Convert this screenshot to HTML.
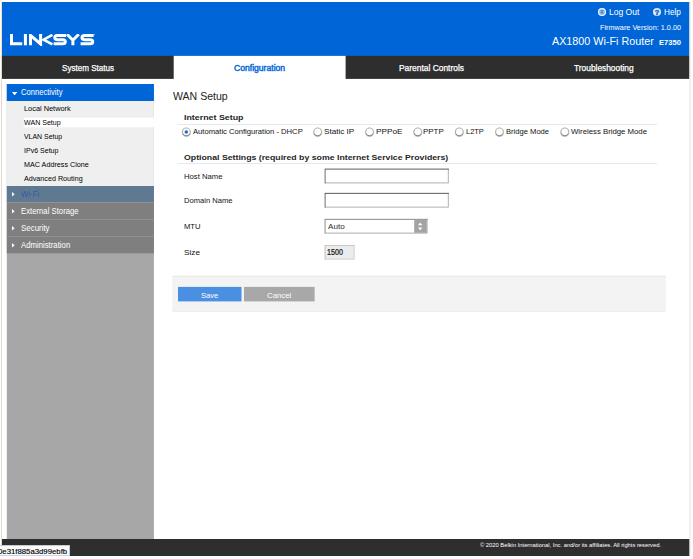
<!DOCTYPE html>
<html><head><meta charset="utf-8">
<style>
html,body{margin:0;padding:0;background:#fff;}
body{width:693px;height:559px;position:relative;overflow:hidden;font-family:"Liberation Sans",sans-serif;}
.a{position:absolute;}
.t{position:absolute;white-space:nowrap;line-height:1;transform-origin:0 0;}
</style></head><body>
<svg class="a" style="left:0;top:0" width="693" height="559" viewBox="0 0 693 559"><rect x="0" y="0" width="1.00" height="559.00" fill="#fffdfb"/>
<rect x="1" y="2" width="1.00" height="54.00" fill="#f3dcc8"/>
<rect x="1" y="56" width="1.00" height="500.00" fill="#e3d9cf"/>
<rect x="689.3" y="2" width="1.30" height="554.00" fill="#ebe8e4"/>
<rect x="2" y="2" width="687.20" height="54.00" fill="#0066d7"/>
<rect x="2" y="55.85" width="687.20" height="23.05" fill="#2e2e2e"/>
<rect x="173.7" y="55.85" width="171.90" height="23.15" fill="#fff"/>
<rect x="6.8" y="84" width="147.10" height="455.00" fill="#a7a7a7"/>
<rect x="6.8" y="84" width="147.10" height="17.00" fill="#0066d7"/>
<rect x="6.8" y="101" width="147.10" height="85.00" fill="#efefef"/>
<rect x="23.8" y="117.7" width="130.10" height="9.60" fill="#fff"/>
<rect x="6.8" y="186" width="147.10" height="16.20" fill="#607993"/>
<rect x="6.8" y="202.2" width="147.10" height="51.10" fill="#7f7f7f"/>
<rect x="6.8" y="202.0" width="147.10" height="0.80" fill="#969696"/>
<rect x="6.8" y="219.2" width="147.10" height="0.80" fill="#969696"/>
<rect x="6.8" y="236.2" width="147.10" height="0.80" fill="#969696"/>
<rect x="178" y="124" width="479.20" height="0.80" fill="#dfe3e8"/>
<rect x="178" y="163" width="479.20" height="0.80" fill="#dfe3e8"/>
<rect x="324.7" y="168.7" width="124.10" height="14.70" fill="#b0b0b0"/>
<rect x="324.7" y="168.7" width="124.10" height="1.00" fill="#5c5c5c"/>
<rect x="324.7" y="169.7" width="1.00" height="13.70" fill="#747474"/>
<rect x="325.7" y="169.7" width="122.10" height="12.70" fill="#fff"/>
<rect x="324.7" y="192.9" width="124.10" height="14.70" fill="#b0b0b0"/>
<rect x="324.7" y="192.9" width="124.10" height="1.00" fill="#5c5c5c"/>
<rect x="324.7" y="193.9" width="1.00" height="13.70" fill="#747474"/>
<rect x="325.7" y="193.9" width="122.10" height="12.70" fill="#fff"/>
<rect x="324.7" y="218.9" width="102.90" height="14.70" fill="#adadad"/>
<rect x="324.7" y="218.9" width="102.90" height="1.00" fill="#8e8e8e"/>
<rect x="324.7" y="219.9" width="1.00" height="13.70" fill="#9c9c9c"/>
<rect x="325.7" y="219.9" width="100.90" height="12.70" fill="#fff"/>
<rect x="414.2" y="219.8" width="12.60" height="13.00" fill="#a3a3a3"/>
<rect x="324.7" y="245.0" width="29.90" height="14.60" fill="#cecece"/>
<rect x="324.7" y="245.0" width="29.90" height="1.00" fill="#c8c8c8"/>
<rect x="324.7" y="246.0" width="1.00" height="13.60" fill="#cacaca"/>
<rect x="325.7" y="246.0" width="27.90" height="12.60" fill="#ececec"/>
<rect x="172.3" y="275.8" width="493.40" height="36.00" fill="#f3f3f3"/>
<rect x="172.3" y="275.8" width="493.40" height="0.80" fill="#e4e4e4"/>
<rect x="172.3" y="311.1" width="493.40" height="0.70" fill="#ebebeb"/>
<rect x="178" y="286.9" width="63.50" height="14.50" fill="#4a8fe2"/>
<rect x="244" y="286.9" width="70.60" height="14.50" fill="#a8a8a8"/>
<rect x="2" y="539" width="687.30" height="17.00" fill="#2e2e2e"/></svg>
<svg class="a" style="left:10.4px;top:34.3px;" width="85" height="12" viewBox="0 0 85 12">
<g fill="none" stroke="#fff" stroke-width="3" stroke-linejoin="miter">
<path d="M1.5 0 V9.8 H12.2"/>
<path d="M15.4 0 V11.3"/>
<path d="M20.5 11.3 V1.4 L30.6 10 V0"/>
<path d="M42.4 0.9 L33.6 5.65 L42.4 10.4" stroke-width="2.6"/>
<path d="M56 1.5 H47.2 Q44.8 1.5 44.8 3.6 Q44.8 5.65 47.2 5.65 H52.9 Q55.3 5.65 55.3 7.7 Q55.3 9.8 52.9 9.8 H43.6"/>
<path d="M57 0.2 L62.9 6.2 L68.8 0.2 M62.9 5.6 V11.3"/>
<path d="M83.6 1.5 H74.4 Q72 1.5 72 3.6 Q72 5.65 74.4 5.65 H80.3 Q82.7 5.65 82.7 7.7 Q82.7 9.8 80.3 9.8 H70.6"/>
</g><circle cx="84.6" cy="0.8" r="0.5" fill="#cfe0f7"/></svg>
<svg class="a" style="left:596.9px;top:7.2px;" width="10" height="10" viewBox="0 0 10 10">
<circle cx="5" cy="5" r="3.45" fill="#7db0eb" stroke="#edf3fc" stroke-width="1.25"/>
<rect x="4.3" y="3.0" width="1.5" height="3.2" fill="#2f74cf"/><rect x="4.3" y="4.3" width="1.5" height="0.7" fill="#a9c9f0"/>
</svg>
<svg class="a" style="left:652px;top:7.2px;" width="10" height="10" viewBox="0 0 10 10">
<circle cx="5" cy="5" r="4.05" fill="#d9e6f7"/>
<text x="5" y="7.6" font-family="Liberation Sans" font-weight="bold" font-size="7.4" fill="#0f5fc6" stroke="#0f5fc6" stroke-width="0.35" text-anchor="middle">?</text>
</svg>
<svg class="a" style="left:11.8px;top:91.9px" width="5.2" height="3.4" viewBox="0 0 5.2 3.4"><path d="M0 0 H5.2 L2.6 3.4 Z" fill="#fff"/></svg>
<svg class="a" style="left:12.3px;top:192.3px" width="2.6" height="4.4" viewBox="0 0 2.6 4.4"><path d="M0 0 V4.4 L2.6 2.2 Z" fill="#fff"/></svg>
<svg class="a" style="left:12.3px;top:209.4px" width="2.6" height="4.4" viewBox="0 0 2.6 4.4"><path d="M0 0 V4.4 L2.6 2.2 Z" fill="#fff"/></svg>
<svg class="a" style="left:12.3px;top:226.4px" width="2.6" height="4.4" viewBox="0 0 2.6 4.4"><path d="M0 0 V4.4 L2.6 2.2 Z" fill="#fff"/></svg>
<svg class="a" style="left:12.3px;top:243.4px" width="2.6" height="4.4" viewBox="0 0 2.6 4.4"><path d="M0 0 V4.4 L2.6 2.2 Z" fill="#fff"/></svg>
<svg class="a" style="left:0;top:120px" width="693" height="24" viewBox="0 120 693 24"><circle cx="186.3" cy="132.5" r="4.1" fill="none" stroke="#cfcfcf" stroke-width="0.9"/><circle cx="186.3" cy="131.9" r="4.0" fill="#fcfcfc" stroke="#a8a8a8" stroke-width="0.95"/><path d="M182.84 129.90 A4.0 4.0 0 0 1 189.76 129.90" fill="none" stroke="#d2d2d2" stroke-width="0.95"/><path d="M182.84 133.90 A4.0 4.0 0 0 0 189.76 133.90" fill="none" stroke="#808080" stroke-width="0.95"/><circle cx="317.7" cy="132.5" r="4.1" fill="none" stroke="#cfcfcf" stroke-width="0.9"/><circle cx="317.7" cy="131.9" r="4.0" fill="#fcfcfc" stroke="#a8a8a8" stroke-width="0.95"/><path d="M314.24 129.90 A4.0 4.0 0 0 1 321.16 129.90" fill="none" stroke="#d2d2d2" stroke-width="0.95"/><path d="M314.24 133.90 A4.0 4.0 0 0 0 321.16 133.90" fill="none" stroke="#808080" stroke-width="0.95"/><circle cx="369.6" cy="132.5" r="4.1" fill="none" stroke="#cfcfcf" stroke-width="0.9"/><circle cx="369.6" cy="131.9" r="4.0" fill="#fcfcfc" stroke="#a8a8a8" stroke-width="0.95"/><path d="M366.14 129.90 A4.0 4.0 0 0 1 373.06 129.90" fill="none" stroke="#d2d2d2" stroke-width="0.95"/><path d="M366.14 133.90 A4.0 4.0 0 0 0 373.06 133.90" fill="none" stroke="#808080" stroke-width="0.95"/><circle cx="417.8" cy="132.5" r="4.1" fill="none" stroke="#cfcfcf" stroke-width="0.9"/><circle cx="417.8" cy="131.9" r="4.0" fill="#fcfcfc" stroke="#a8a8a8" stroke-width="0.95"/><path d="M414.34 129.90 A4.0 4.0 0 0 1 421.26 129.90" fill="none" stroke="#d2d2d2" stroke-width="0.95"/><path d="M414.34 133.90 A4.0 4.0 0 0 0 421.26 133.90" fill="none" stroke="#808080" stroke-width="0.95"/><circle cx="459.3" cy="132.5" r="4.1" fill="none" stroke="#cfcfcf" stroke-width="0.9"/><circle cx="459.3" cy="131.9" r="4.0" fill="#fcfcfc" stroke="#a8a8a8" stroke-width="0.95"/><path d="M455.84 129.90 A4.0 4.0 0 0 1 462.76 129.90" fill="none" stroke="#d2d2d2" stroke-width="0.95"/><path d="M455.84 133.90 A4.0 4.0 0 0 0 462.76 133.90" fill="none" stroke="#808080" stroke-width="0.95"/><circle cx="499.5" cy="132.5" r="4.1" fill="none" stroke="#cfcfcf" stroke-width="0.9"/><circle cx="499.5" cy="131.9" r="4.0" fill="#fcfcfc" stroke="#a8a8a8" stroke-width="0.95"/><path d="M496.04 129.90 A4.0 4.0 0 0 1 502.96 129.90" fill="none" stroke="#d2d2d2" stroke-width="0.95"/><path d="M496.04 133.90 A4.0 4.0 0 0 0 502.96 133.90" fill="none" stroke="#808080" stroke-width="0.95"/><circle cx="564.8" cy="132.5" r="4.1" fill="none" stroke="#cfcfcf" stroke-width="0.9"/><circle cx="564.8" cy="131.9" r="4.0" fill="#fcfcfc" stroke="#a8a8a8" stroke-width="0.95"/><path d="M561.34 129.90 A4.0 4.0 0 0 1 568.26 129.90" fill="none" stroke="#d2d2d2" stroke-width="0.95"/><path d="M561.34 133.90 A4.0 4.0 0 0 0 568.26 133.90" fill="none" stroke="#808080" stroke-width="0.95"/><circle cx="186.3" cy="131.9" r="1.75" fill="#1b6ad0"/></svg>
<svg class="a" style="left:418.4px;top:222px" width="4.4" height="8.6" viewBox="0 0 4.4 8.6"><path d="M0 3.2 L2.2 0.4 L4.4 3.2 Z M0 5.4 L2.2 8.2 L4.4 5.4 Z" fill="#fff"/></svg>
<div class="a" style="left:0px;top:545px;width:69.70px;height:11.40px;background:#fbfbfb;box-sizing:border-box;border-top:0.8px solid #c9c9c9;border-right:0.8px solid #c9c9c9;border-bottom:0.8px solid #c5d3e6;overflow:hidden;"></div>
<div class="t" style="left:608.61px;top:8.70px;font-size:8.2px;color:#fff;transform:scaleX(1.0411);">Log Out</div>
<div class="t" style="left:664.15px;top:8.70px;font-size:8.2px;color:#fff;transform:scaleX(1.0028);">Help</div>
<div class="t" style="left:600.10px;top:25.45px;font-size:6.7px;color:#fff;transform:scaleX(1.0902);">Firmware Version: 1.0.00</div>
<div class="t" style="left:552.35px;top:36.65px;font-size:10.3px;color:#fff;transform:scaleX(1.0459);">AX1800 Wi-Fi Router</div>
<div class="t" style="left:659.02px;top:39.50px;font-size:6.6px;font-weight:bold;color:#fff;transform:scaleX(1.1547);">E7350</div>
<div class="t" style="left:62.01px;top:64.10px;font-size:8.4px;color:#fff;transform:scaleX(0.9650);-webkit-text-stroke:0.25px currentColor;">System Status</div>
<div class="t" style="left:234.16px;top:64.10px;font-size:8.4px;color:#0066d7;transform:scaleX(1.0260);-webkit-text-stroke:0.4px currentColor;">Configuration</div>
<div class="t" style="left:399.00px;top:64.10px;font-size:8.4px;color:#fff;transform:scaleX(1.0039);-webkit-text-stroke:0.25px currentColor;">Parental Controls</div>
<div class="t" style="left:573.82px;top:64.10px;font-size:8.4px;color:#fff;transform:scaleX(0.9982);-webkit-text-stroke:0.25px currentColor;">Troubleshooting</div>
<div class="t" style="left:21.20px;top:88.70px;font-size:8.2px;color:#fff;transform:scaleX(0.9304);">Connectivity</div>
<div class="t" style="left:23.69px;top:105.10px;font-size:7.4px;color:#000;transform:scaleX(0.9983);">Local Network</div>
<div class="t" style="left:23.89px;top:119.10px;font-size:7.4px;color:#000;transform:scaleX(0.9571);">WAN Setup</div>
<div class="t" style="left:23.89px;top:133.10px;font-size:7.4px;color:#000;transform:scaleX(0.9372);">VLAN Setup</div>
<div class="t" style="left:23.64px;top:147.10px;font-size:7.4px;color:#000;transform:scaleX(0.9517);">IPv6 Setup</div>
<div class="t" style="left:23.71px;top:161.10px;font-size:7.4px;color:#000;transform:scaleX(0.9733);">MAC Address Clone</div>
<div class="t" style="left:23.89px;top:175.10px;font-size:7.4px;color:#000;transform:scaleX(0.9705);">Advanced Routing</div>
<div class="t" style="left:21.36px;top:190.70px;font-size:8.2px;color:#315e96;transform:scaleX(0.9523);">Wi-Fi</div>
<div class="t" style="left:20.77px;top:207.70px;font-size:8.2px;color:#fff;transform:scaleX(0.9447);">External Storage</div>
<div class="t" style="left:20.75px;top:224.70px;font-size:8.2px;color:#fff;transform:scaleX(0.9663);">Security</div>
<div class="t" style="left:21.03px;top:241.70px;font-size:8.2px;color:#fff;transform:scaleX(0.9486);">Administration</div>
<div class="t" style="left:172.74px;top:90.75px;font-size:11.1px;color:#222;transform:scaleX(0.9501);">WAN Setup</div>
<div class="t" style="left:184.13px;top:113.80px;font-size:8.0px;font-weight:bold;color:#262626;transform:scaleX(1.1066);">Internet Setup</div>
<div class="t" style="left:192.82px;top:128.00px;font-size:7.6px;color:#111;transform:scaleX(1.0037);">Automatic Configuration - DHCP</div>
<div class="t" style="left:324.02px;top:128.00px;font-size:7.6px;color:#111;transform:scaleX(1.0712);">Static IP</div>
<div class="t" style="left:375.52px;top:128.00px;font-size:7.6px;color:#111;transform:scaleX(1.0857);">PPPoE</div>
<div class="t" style="left:423.36px;top:128.00px;font-size:7.6px;color:#111;transform:scaleX(1.0414);">PPTP</div>
<div class="t" style="left:465.78px;top:128.00px;font-size:7.6px;color:#111;transform:scaleX(0.9782);">L2TP</div>
<div class="t" style="left:505.97px;top:128.00px;font-size:7.6px;color:#111;transform:scaleX(1.0001);">Bridge Mode</div>
<div class="t" style="left:570.93px;top:128.00px;font-size:7.6px;color:#111;transform:scaleX(1.0232);">Wireless Bridge Mode</div>
<div class="t" style="left:183.91px;top:153.80px;font-size:8.0px;font-weight:bold;color:#262626;transform:scaleX(1.0927);">Optional Settings (required by some Internet Service Providers)</div>
<div class="t" style="left:183.88px;top:173.00px;font-size:7.6px;color:#111;transform:scaleX(1.0118);">Host Name</div>
<div class="t" style="left:183.87px;top:197.00px;font-size:7.6px;color:#111;transform:scaleX(0.9988);">Domain Name</div>
<div class="t" style="left:183.89px;top:223.00px;font-size:7.6px;color:#111;transform:scaleX(1.0044);">MTU</div>
<div class="t" style="left:183.81px;top:249.00px;font-size:7.6px;color:#111;transform:scaleX(1.0871);">Size</div>
<div class="t" style="left:327.82px;top:223.10px;font-size:7.4px;color:#2a2a2a;transform:scaleX(1.0969);">Auto</div>
<div class="t" style="left:327.47px;top:248.70px;font-size:8.2px;color:#111;transform:scaleX(0.8774);-webkit-text-stroke:0.2px currentColor;">1500</div>
<div class="t" style="left:201.34px;top:292.00px;font-size:7.6px;color:#fff;transform:scaleX(0.9998);">Save</div>
<div class="t" style="left:267.32px;top:292.00px;font-size:7.6px;color:#fff;transform:scaleX(1.0286);">Cancel</div>
<div class="t" style="left:480.21px;top:542.60px;font-size:5.4px;color:#fff;transform:scaleX(1.0734);">© 2020 Belkin International, Inc. and/or its affiliates. All rights reserved.</div>
<div class="t" style="left:-1.96px;top:547.80px;font-size:8.0px;color:#000;transform:scaleX(0.9709);-webkit-text-stroke:0.15px #000;">0e31f885a3d99ebfb</div>
</body></html>
